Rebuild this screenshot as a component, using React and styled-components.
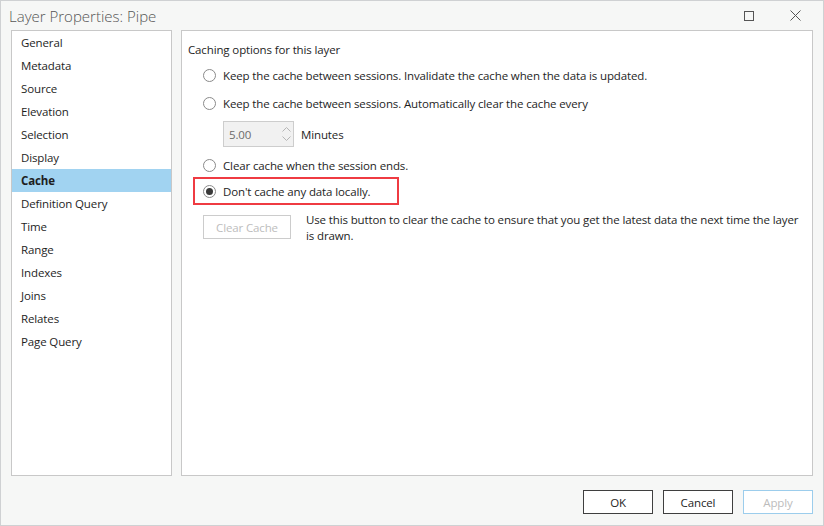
import styled, { createGlobalStyle } from 'styled-components';

const GlobalStyle = createGlobalStyle`
  html, body { margin: 0; padding: 0; }
  body {
    font-family: "Open Sans", "Noto Sans", sans-serif;
    font-size: 11.5px;
    letter-spacing: -0.13px;
    color: #1e1e1e;
  }
`;

const Window = styled.div`
  width: 824px;
  height: 526px;
  box-sizing: border-box;
  background: #f6f7f6;
  border: 1px solid #cfd1d3;
  display: flex;
  flex-direction: column;
`;

const TitleBar = styled.div`
  height: 29px;
  flex-shrink: 0;
  display: flex;
  align-items: center;
  padding-left: 8px;
  padding-right: 10px;
`;

const Title = styled.div`
  flex: 1;
  font-size: 15px;
  font-weight: 300;
  color: #555;
  letter-spacing: 0;
`;

const TitleButton = styled.div`
  width: 36px;
  height: 28px;
  display: flex;
  align-items: center;
  justify-content: center;
  margin-left: ${(p) => p.gap || 0}px;
`;

const Body = styled.div`
  flex: 1;
  display: flex;
  gap: 9px;
  padding: 0 10px;
`;

const NavList = styled.div`
  width: 161px;
  height: 446px;
  box-sizing: border-box;
  background: #fff;
  border: 1px solid #c8c8c8;
`;

const NavItem = styled.div`
  height: 23px;
  line-height: 23px;
  padding-left: 9px;
  background: ${(p) => (p.active ? '#a1d3f1' : 'transparent')};
  font-weight: ${(p) => (p.active ? 700 : 400)};
`;

const Content = styled.div`
  width: 632px;
  height: 446px;
  box-sizing: border-box;
  background: #fff;
  border: 1px solid #c8c8c8;
  padding: 10px 6px 0 6px;
`;

const Heading = styled.div`
  height: 18px;
  line-height: 18px;
`;

const Options = styled.div`
  padding-left: 15px;
  margin-top: 2px;
  display: flex;
  flex-direction: column;
`;

const RadioRow = styled.label`
  display: flex;
  align-items: center;
  gap: 7px;
  height: ${(p) => p.h || 28}px;
`;

const Radio = styled.span`
  width: 13px;
  height: 13px;
  box-sizing: border-box;
  border-radius: 50%;
  border: 1px solid #8a8a8a;
  background: #fff;
  display: flex;
  align-items: center;
  justify-content: center;

  &::after {
    content: '';
    width: 7px;
    height: 7px;
    border-radius: 50%;
    background: ${(p) => (p.checked ? '#3a3a3a' : 'transparent')};
  }
`;

const Highlight = styled.div`
  margin-left: -10px;
  width: 206px;
  height: 28px;
  box-sizing: border-box;
  border: 2px solid #ef3b42;
  padding-left: 8px;
  display: flex;
  align-items: center;
`;

const SpinRow = styled.div`
  display: flex;
  align-items: center;
  gap: 7px;
  padding-left: 20px;
  padding-bottom: 2px;
  height: 34px;
`;

const Spinner = styled.div`
  width: 71px;
  height: 26px;
  box-sizing: border-box;
  background: #f1f1f1;
  border: 1px solid #cdcdcd;
  display: flex;
  align-items: center;
  padding-left: 5px;
  color: #6b6b6b;
`;

const SpinValue = styled.span`
  flex: 1;
`;

const SpinArrows = styled.span`
  width: 14px;
  display: flex;
  flex-direction: column;
  align-items: center;
  gap: 4px;
`;

const ButtonRow = styled.div`
  display: flex;
  gap: 15px;
  margin-top: 10px;
`;

const ClearButton = styled.div`
  width: 88px;
  height: 24px;
  box-sizing: border-box;
  border: 1px solid #cccccc;
  color: #bdbdbd;
  display: flex;
  align-items: center;
  justify-content: center;
  flex-shrink: 0;
`;

const Note = styled.div`
  width: 500px;
  line-height: 16px;
  margin-top: -3px;
`;

const Footer = styled.div`
  height: 49px;
  flex-shrink: 0;
  display: flex;
  align-items: center;
  justify-content: flex-end;
  gap: 10px;
  padding-right: 10px;
  padding-top: 3px;
  box-sizing: border-box;
`;

const DialogButton = styled.div`
  width: 70px;
  height: 24px;
  box-sizing: border-box;
  border: 1px solid ${(p) => (p.disabled ? '#9ccdec' : '#3f3f3f')};
  color: ${(p) => (p.disabled ? '#bcbcbc' : '#1e1e1e')};
  background: #fff;
  display: flex;
  align-items: center;
  justify-content: center;
`;

const navItems = [
  'General', 'Metadata', 'Source', 'Elevation', 'Selection', 'Display', 'Cache',
  'Definition Query', 'Time', 'Range', 'Indexes', 'Joins', 'Relates', 'Page Query',
];

const Chevron = ({ down }) => (
  <svg width="9" height="5" viewBox="0 0 9 5">
    <path d={down ? 'M0.5 0.5 L4.5 4.5 L8.5 0.5' : 'M0.5 4.5 L4.5 0.5 L8.5 4.5'} fill="none" stroke="#b5b5b5" strokeWidth="1" />
  </svg>
);

const App = () => (
  <>
    <GlobalStyle />
    <Window>
      <TitleBar>
        <Title>Layer Properties: Pipe</Title>
        <TitleButton>
          <svg width="10" height="10" viewBox="0 0 10 10">
            <rect x="0.5" y="0.5" width="9" height="9" fill="none" stroke="#555" strokeWidth="1" />
          </svg>
        </TitleButton>
        <TitleButton gap={10}>
          <svg width="11" height="11" viewBox="0 0 11 11">
            <path d="M0.5 0.5 L10.5 10.5 M10.5 0.5 L0.5 10.5" stroke="#555" strokeWidth="1" />
          </svg>
        </TitleButton>
      </TitleBar>
      <Body>
        <NavList>
          {navItems.map((item) => (
            <NavItem key={item} active={item === 'Cache'}>{item}</NavItem>
          ))}
        </NavList>
        <Content>
          <Heading>Caching options for this layer</Heading>
          <Options>
            <RadioRow>
              <Radio />
              Keep the cache between sessions. Invalidate the cache when the data is updated.
            </RadioRow>
            <RadioRow>
              <Radio />
              Keep the cache between sessions. Automatically clear the cache every
            </RadioRow>
            <SpinRow>
              <Spinner>
                <SpinValue>5.00</SpinValue>
                <SpinArrows>
                  <Chevron />
                  <Chevron down />
                </SpinArrows>
              </Spinner>
              Minutes
            </SpinRow>
            <RadioRow h={24}>
              <Radio />
              Clear cache when the session ends.
            </RadioRow>
            <Highlight>
              <RadioRow h={24}>
                <Radio checked />
                Don't cache any data locally.
              </RadioRow>
            </Highlight>
            <ButtonRow>
              <ClearButton>Clear Cache</ClearButton>
              <Note>
                Use this button to clear the cache to ensure that you get the latest data the next time the layer is drawn.
              </Note>
            </ButtonRow>
          </Options>
        </Content>
      </Body>
      <Footer>
        <DialogButton>OK</DialogButton>
        <DialogButton>Cancel</DialogButton>
        <DialogButton disabled>Apply</DialogButton>
      </Footer>
    </Window>
  </>
);

export default App;
